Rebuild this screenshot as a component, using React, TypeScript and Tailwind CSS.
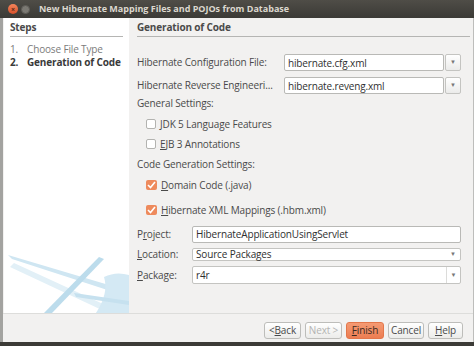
import React from 'react';

const font = { fontFamily: '"Open Sans", "Noto Sans", sans-serif' };

// combo box with a separate dropdown button
function Combo({ value, height = 'h-[17px]' }: { value: string; height?: string }) {
  return (
    <div className={`flex ${height} flex-1`}>
      <div className="flex-1 flex items-center bg-white border border-[#b9b9b6] rounded-[2px] px-[3px] text-[#2f2f2f] leading-none">
        {value}
      </div>
      <div className="w-[16px] ml-[1px] flex items-center justify-center bg-gradient-to-b from-white to-[#ebebea] border border-[#c4c4c1] rounded-[2px]">
        <span className="text-[6px] text-[#777]">▼</span>
      </div>
    </div>
  );
}

function Check({ checked, children }: { checked?: boolean; children: React.ReactNode }) {
  return (
    <div className="flex items-center h-[14px] pl-[9px]">
      {checked ? (
        <div className="w-[11px] h-[10px] rounded-[2px] bg-[#ee8a5c] flex items-center justify-center">
          <svg width="9" height="8" viewBox="0 0 9 8">
            <path d="M1 4 L3.5 6.5 L8 1" fill="none" stroke="#fff" strokeWidth="1.6" />
          </svg>
        </div>
      ) : (
        <div className="w-[10px] h-[10px] rounded-[2px] bg-white border border-[#b3b3b0]" />
      )}
      <span className="ml-[4px] text-[#4a4a4a]">{children}</span>
    </div>
  );
}

function Btn({ children, primary, disabled, w }: { children: React.ReactNode; primary?: boolean; disabled?: boolean; w: string }) {
  return (
    <div
      className={`${w} h-[17px] flex items-center justify-center rounded-[3px] border text-[10px] ${
        primary
          ? 'bg-gradient-to-b from-[#f49a73] to-[#ec7d52] border-[#e3764a] text-[#3a2a22]'
          : 'bg-gradient-to-b from-white to-[#ececea] border-[#bdbdba] ' + (disabled ? 'text-[#b4b4b2]' : 'text-[#4a4a4a]')
      }`}
    >
      {children}
    </div>
  );
}

export default function App() {
  return (
    <div className="w-[474px] h-[346px] flex flex-col bg-[#f2f1f0] overflow-hidden text-[10px] tracking-[-0.15px]" style={font}>
      {/* Title bar */}
      <div className="h-[18px] flex items-center bg-gradient-to-b from-[#4f4d47] to-[#3b3a36] shrink-0">
        <div className="ml-[8px] w-[10px] h-[10px] rounded-full bg-gradient-to-b from-[#f5845a] to-[#d8502a] flex items-center justify-center">
          <span className="text-[7px] leading-none text-[#5a2a18] font-bold">×</span>
        </div>
        <div className="ml-[3px] w-[9px] h-[9px] rounded-full bg-[#7b7973] border border-[#5e5c57]" />
        <span className="ml-[9px] text-[9px] font-bold text-[#dcd8cf] tracking-[0px]">
          New Hibernate Mapping Files and POJOs from Database
        </span>
      </div>

      <div className="flex-1 flex flex-col border-l-[3px] border-l-[#a3a3a0] border-r border-r-[#bdbdbb]">
        <div className="h-[295px] flex">
          {/* Steps panel */}
          <div className="ml-[1px] w-[125px] shrink-0 bg-white relative flex flex-col">
            <div className="mx-[6px] mt-[4px] h-[15px] flex items-end pb-[1px] border-b border-[#b5b5b3] font-bold text-[#4a4a4a]">
              Steps
            </div>
            <div className="mt-[6px] ml-[6px] leading-[13px] text-[#7b7b7b] flex whitespace-nowrap">
              <span className="w-[17px]">1.</span>
              <span>Choose File Type</span>
            </div>
            <div className="ml-[6px] leading-[13px] font-bold text-[#3a3a3a] flex whitespace-nowrap">
              <span className="w-[17px]">2.</span>
              <span>Generation of Code</span>
            </div>
            <svg className="absolute left-0 bottom-0" width="125" height="60" viewBox="0 0 125 60">
              <path d="M4 2 L125 38 L125 44 L8 6 Z" fill="#cfe6f2" />
              <path d="M10 10 L110 56 L100 58 L6 14 Z" fill="#e2f0f7" />
              <path d="M95 4 L40 60 L48 60 L100 6 Z" fill="#bcdcec" />
              <path d="M100 24 Q112 18 125 22 L125 60 L92 60 Q105 40 100 24 Z" fill="#d4e9f4" />
              <path d="M70 40 L125 48 L125 52 L72 44 Z" fill="#c6e1ef" />
            </svg>
          </div>

          {/* Content */}
          <div className="flex-1 ml-[8px] mr-[3px] flex flex-col text-[#4a4a4a] whitespace-nowrap">
            <div className="mt-[4px] h-[15px] flex items-end pb-[1px] border-b border-[#b5b5b3] font-bold text-[#4a4a4a]">
              Generation of Code
            </div>

            <div className="mt-[17px] flex items-center pr-[9px]">
              <span className="w-[147px] shrink-0">Hibernate Configuration File:</span>
              <Combo value="hibernate.cfg.xml" />
            </div>
            <div className="mt-[6px] flex items-center pr-[9px]">
              <span className="w-[147px] shrink-0">Hibernate Reverse Engineeri...</span>
              <Combo value="hibernate.reveng.xml" />
            </div>

            <div className="mt-[2px] h-[14px] leading-[14px]">General Settings:</div>
            <div className="mt-[7px]">
              <Check>
                <u>J</u>DK 5 Language Features
              </Check>
            </div>
            <div className="mt-[6px]">
              <Check>
                <u>E</u>JB 3 Annotations
              </Check>
            </div>
            <div className="mt-[6px] h-[14px] leading-[14px]">Code Generation Settings:</div>
            <div className="mt-[7px]">
              <Check checked>
                <u>D</u>omain Code (.java)
              </Check>
            </div>
            <div className="mt-[11px]">
              <Check checked>
                <u>H</u>ibernate XML Mappings (.hbm.xml)
              </Check>
            </div>

            <div className="mt-[9px] flex items-center pr-[9px]">
              <span className="w-[55px] shrink-0">
                P<u>r</u>oject:
              </span>
              <div className="flex-1 h-[17px] flex items-center bg-white border border-[#b9b9b6] rounded-[2px] px-[3px] text-[#2f2f2f]">
                HibernateApplicationUsingServlet
              </div>
            </div>
            <div className="mt-[4px] flex items-center pr-[9px]">
              <span className="w-[55px] shrink-0">
                <u>L</u>ocation:
              </span>
              <div className="flex-1 h-[13px] flex items-center bg-white border border-[#c4c4c1] rounded-[2px] pl-[3px] text-[#2f2f2f]">
                <span className="flex-1">Source Packages</span>
                <span className="w-[14px] text-center text-[6px] text-[#777]">▼</span>
              </div>
            </div>
            <div className="mt-[4px] flex items-center pr-[9px]">
              <span className="w-[55px] shrink-0">
                <u>P</u>ackage:
              </span>
              <div className="flex-1 h-[18px] flex items-center bg-white border border-[#c4c4c1] rounded-[2px] pl-[3px] text-[#2f2f2f]">
                <span className="flex-1">r4r</span>
                <span className="w-[14px] h-full border-l border-[#dcdcda] flex items-center justify-center text-[6px] text-[#777]">▼</span>
              </div>
            </div>
          </div>
        </div>

        {/* Button bar */}
        <div className="flex-1 border-t border-[#dddddb] flex items-start pt-[8px] pl-[261px] gap-[4px]">
          <Btn w="w-[37px]">
            &lt;<u>B</u>ack
          </Btn>
          <Btn w="w-[37px]" disabled>
            Next &gt;
          </Btn>
          <Btn w="w-[38px]" primary>
            <u>F</u>inish
          </Btn>
          <Btn w="w-[36px]">Cancel</Btn>
          <Btn w="w-[35px]">
            <u>H</u>elp
          </Btn>
        </div>
      </div>
      <div className="h-[4px] bg-[#3c3b37] shrink-0" />
    </div>
  );
}
